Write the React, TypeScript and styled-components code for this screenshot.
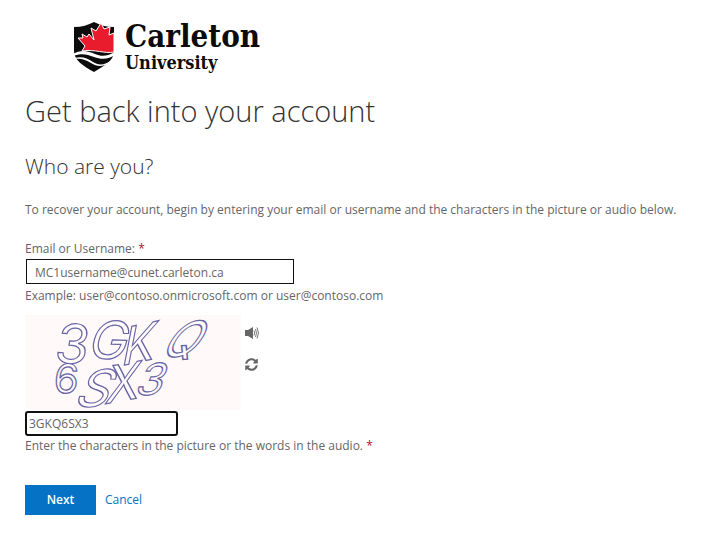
import React, { useState } from "react";
import styled, { createGlobalStyle } from "styled-components";
import { FaSyncAlt } from "react-icons/fa";

const GlobalStyle = createGlobalStyle`
  *, *::before, *::after { box-sizing: border-box; }
  body {
    margin: 0;
    background: #fff;
    color: #666;
    font-family: "Open Sans", "Noto Sans", sans-serif;
    font-size: 12px;
    line-height: 16px;
  }
`;

const Page = styled.main`
  display: flex;
  flex-direction: column;
  align-items: flex-start;
  padding: 20px 24px 32px 25px;
`;

const Brand = styled.header`
  display: flex;
  align-items: flex-start;
  gap: 10px;
  height: 54px;
  margin-left: 48px;
`;

const BrandName = styled.div`
  display: flex;
  flex-direction: column;
  color: #0c0c0c;
  font-family: "DejaVu Serif Condensed", "DejaVu Serif", serif;
  font-weight: 700;
`;

const BrandLine = styled.span<{ $small?: boolean }>`
  font-size: ${(p) => (p.$small ? 18 : 31)}px;
  line-height: ${(p) => (p.$small ? 20 : 33)}px;
`;

const Title = styled.h1`
  margin: 16px 0 0;
  color: #333;
  font-size: 29px;
  font-weight: 300;
  line-height: 42px;
`;

const Subtitle = styled.h2`
  margin: 20px 0 0;
  color: #333;
  font-size: 21px;
  font-weight: 300;
  line-height: 28px;
`;

const Intro = styled.p`
  margin: 22px 0 0;
`;

const Form = styled.form`
  display: flex;
  flex-direction: column;
  align-items: flex-start;
  margin-top: 23px;
`;

const Required = styled.span`
  color: #b0122b;
`;

const Field = styled.input<{ $captcha?: boolean }>`
  width: ${(p) => (p.$captcha ? 153 : 268)}px;
  max-width: 100%;
  height: 25px;
  margin: ${(p) => (p.$captcha ? "1px 0 2px" : "2px 0 4px 1px")};
  padding: ${(p) => (p.$captcha ? "0 2px" : "1px 8px 0")};
  border: ${(p) => (p.$captcha ? 2 : 1)}px solid #111;
  border-radius: ${(p) => (p.$captcha ? 3 : 0)}px;
  outline: none;
  background: #fff;
  color: #666;
  font: inherit;
`;

const Challenge = styled.div`
  display: flex;
  gap: 4px;
  margin-top: 11px;
`;

const ChallengeTools = styled.div`
  display: flex;
  flex-direction: column;
  gap: 18px;
  padding-top: 11px;
`;

const ToolButton = styled.button`
  display: flex;
  padding: 0;
  border: 0;
  background: none;
  color: #666;
  cursor: pointer;
`;

const Actions = styled.div`
  display: flex;
  align-items: center;
  gap: 9px;
  margin-top: 31px;
`;

const PrimaryButton = styled.button`
  width: 71px;
  height: 30px;
  padding: 0;
  border: 0;
  background: #0672c6;
  color: #fff;
  font: inherit;
  font-weight: 600;
  cursor: pointer;
`;

const CancelLink = styled.a`
  color: #0672c6;
  text-decoration: none;
`;

const Picture = styled.svg`
  display: block;
  overflow: visible;
`;

const Glyph = styled.text`
  fill: #fffafb;
  stroke: #6664a4;
  stroke-width: 1.2px;
  font-family: "Inter", sans-serif;
`;

const glyphs = [
  { char: "3", x: 28, y: 47, size: 54, turn: 4, lean: -6 },
  { char: "G", x: 61, y: 43, size: 52, turn: 2, lean: -14 },
  { char: "K", x: 95, y: 51, size: 50, turn: -12, lean: -23 },
  { char: "Q", x: 133, y: 43, size: 47, turn: -4, lean: -36 },
  { char: "6", x: 28, y: 78, size: 40, turn: 0, lean: -4 },
  { char: "S", x: 47, y: 91, size: 52, turn: 2, lean: -24 },
  { char: "X", x: 79, y: 89, size: 50, turn: -10, lean: -20 },
  { char: "3", x: 108, y: 80, size: 44, turn: 0, lean: -22 },
];

const Shield = () => (
  <svg width="42" height="52" viewBox="0 0 42 52" aria-hidden="true">
    <path
      fill="#0c0c0c"
      d="M1 7C9 7 15 5 21 2C27 5 33 7 41 7V31C41 41 31 46 21 52C10 46 1 40 1 31Z"
    />
    <path
      fill="#e91c2d"
      stroke="#fff"
      strokeWidth="1"
      d="M28 3L31 9L37 7L36 15L41 13V32C31 34 23 29 9 31L12 26L5 18L10 18L9 14L14 17L16 14L21 20L18 8L23 11Z"
    />
    <path
      fill="#fff"
      d="M0 34C8 29 15 31 22 34C29 37 35 36 42 32V35C36 39 29 40 21 37C14 34 8 33 0 36Z"
    />
    <path
      fill="#fff"
      d="M1 38C9 36 14 38 20 42C26 46 32 45 39 40L36 43C30 47 24 47 18 43C13 40 8 38 2 39Z"
    />
  </svg>
);

const Speaker = () => (
  <svg width="14" height="14" viewBox="0 0 14 14" aria-hidden="true">
    <path fill="#666" d="M0 4H3L8 1V13L3 10H0Z" />
    <path
      fill="none"
      stroke="#777"
      d="M9 4.500Q10.500 7 9 9.500M10.500 3Q12.500 7 10.500 11M12 1.500Q15 7 12 12.500"
    />
  </svg>
);

const Captcha = () => (
  <Picture
    width="216"
    height="95"
    viewBox="0 0 216 95"
    role="img"
    aria-label="Verification picture"
  >
    <rect width="216" height="95" fill="#fff9fa" />
    {glyphs.map((g, i) => (
      <Glyph
        key={i}
        fontSize={g.size}
        transform={`translate(${g.x} ${g.y}) rotate(${g.turn}) skewX(${g.lean})`}
      >
        {g.char}
      </Glyph>
    ))}
  </Picture>
);

export default function App() {
  const [user, setUser] = useState("MC1username@cunet.carleton.ca");
  const [answer, setAnswer] = useState("3GKQ6SX3");

  return (
    <>
      <GlobalStyle />
      <Page>
        <Brand>
          <Shield />
          <BrandName>
            <BrandLine>Carleton</BrandLine>
            <BrandLine $small>University</BrandLine>
          </BrandName>
        </Brand>
        <Title>Get back into your account</Title>
        <Subtitle>Who are you?</Subtitle>
        <Intro>
          To recover your account, begin by entering your email or username and the characters in
          the picture or audio below.
        </Intro>
        <Form onSubmit={(e) => e.preventDefault()}>
          <label htmlFor="user">
            Email or Username: <Required>*</Required>
          </label>
          <Field id="user" value={user} onChange={(e) => setUser(e.target.value)} />
          <span>Example: user@contoso.onmicrosoft.com or user@contoso.com</span>
          <Challenge>
            <Captcha />
            <ChallengeTools>
              <ToolButton type="button" aria-label="Play audio">
                <Speaker />
              </ToolButton>
              <ToolButton type="button" aria-label="New picture">
                <FaSyncAlt size={13} />
              </ToolButton>
            </ChallengeTools>
          </Challenge>
          <Field $captcha id="answer" value={answer} onChange={(e) => setAnswer(e.target.value)} />
          <label htmlFor="answer">
            Enter the characters in the picture or the words in the audio. <Required>*</Required>
          </label>
          <Actions>
            <PrimaryButton type="submit">Next</PrimaryButton>
            <CancelLink href="#cancel">Cancel</CancelLink>
          </Actions>
        </Form>
      </Page>
    </>
  );
}
